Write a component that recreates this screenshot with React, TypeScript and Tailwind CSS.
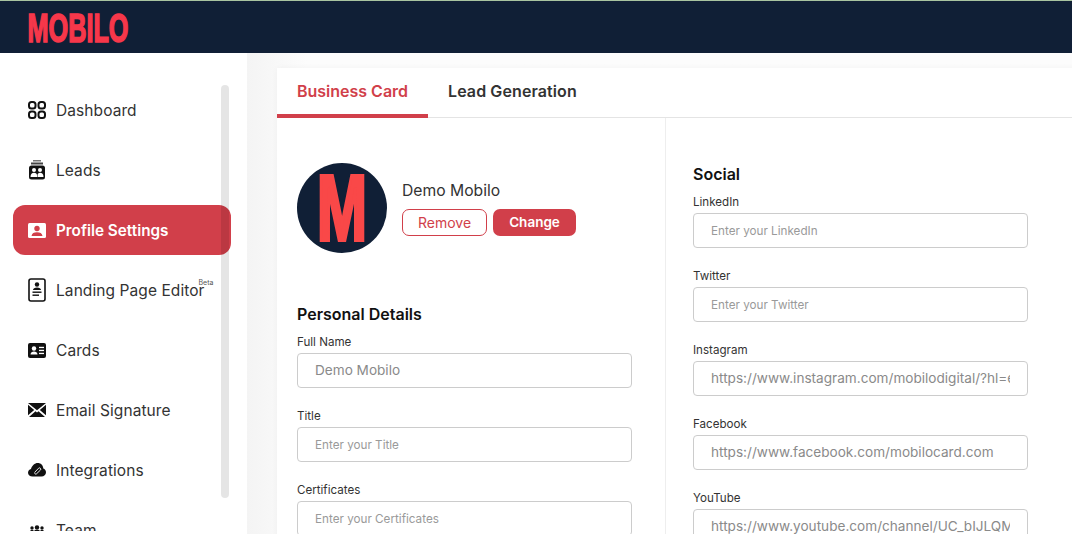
import type { ReactNode } from "react";

const font = { fontFamily: '"Inter", "Noto Sans", sans-serif' };

const navItems: { label: string; icon: ReactNode; active?: boolean; beta?: boolean }[] = [
  {
    label: "Dashboard",
    icon: (
      <svg width="18" height="18" viewBox="0 0 18 18" fill="none" stroke="#111" strokeWidth="2">
        <rect x="1" y="1" width="6.5" height="6.5" rx="2.5" />
        <rect x="10.5" y="1" width="6.5" height="6.5" rx="2.5" />
        <rect x="1" y="10.5" width="6.5" height="6.5" rx="2.5" />
        <rect x="10.5" y="10.5" width="6.5" height="6.5" rx="2.5" />
      </svg>
    ),
  },
  {
    label: "Leads",
    icon: (
      <svg width="18" height="20" viewBox="0 0 18 20">
        <rect x="5" y="0" width="8" height="1.5" fill="#777" />
        <rect x="3" y="2.5" width="12" height="2" fill="#444" />
        <rect x="1" y="5.5" width="16" height="14" rx="2.5" fill="#111" />
        <circle cx="6" cy="10" r="2" fill="#fff" />
        <circle cx="12" cy="10" r="2" fill="#fff" />
        <path d="M2.5 17c0-3 1.5-4.2 3.5-4.2s3 1 3 2.8v1.4zM9.5 17v-1.4c0-1.8 1-2.8 2.5-2.8 2 0 3.5 1.200 3.500 4.200z" fill="#fff" />
      </svg>
    ),
  },
  {
    label: "Profile Settings",
    active: true,
    icon: (
      <svg width="18" height="15" viewBox="0 0 18 15">
        <rect x="0" y="0" width="18" height="15" rx="1.500" fill="#fff" />
        <circle cx="9" cy="5.500" r="2.700" fill="#d13f4a" />
        <path d="M3.500 13c.4-2.800 2.500-3.800 5.500-3.800s5.100 1 5.500 3.800z" fill="#d13f4a" />
      </svg>
    ),
  },
  {
    label: "Landing Page Editor",
    beta: true,
    icon: (
      <svg width="18" height="24" viewBox="0 0 18 24">
        <rect x="1" y="1" width="16" height="22" rx="2" fill="none" stroke="#111" strokeWidth="1.600" />
        <circle cx="9" cy="6.500" r="2.200" fill="#111" />
        <path d="M5 12c0-1.800 1.800-2.600 4-2.600s4 .8 4 2.600z" fill="#111" />
        <rect x="4.500" y="13.500" width="9" height="1.400" fill="#111" />
        <rect x="4.500" y="16.500" width="6.500" height="1.400" fill="#111" />
      </svg>
    ),
  },
  {
    label: "Cards",
    icon: (
      <svg width="18" height="15" viewBox="0 0 18 15">
        <rect x="0" y="0" width="18" height="15" rx="2" fill="#111" />
        <circle cx="6" cy="5.500" r="2.200" fill="#fff" />
        <path d="M2.500 11.500c.2-2.200 1.600-3 3.500-3s3.300.8 3.500 3z" fill="#fff" />
        <rect x="11" y="3.800" width="5" height="1.300" fill="#fff" />
        <rect x="11" y="6.800" width="5" height="1.300" fill="#fff" />
        <rect x="11" y="9.800" width="5" height="1.300" fill="#fff" />
      </svg>
    ),
  },
  {
    label: "Email Signature",
    icon: (
      <svg width="18" height="14" viewBox="0 0 18 14">
        <path d="M0 0h18L9 7.200zM0 1.800v10.400L6.200 7zM18 1.800v10.400L11.800 7zM1 14l6.500-5.700L9 9.500l1.500-1.200L17 14z" fill="#111" />
      </svg>
    ),
  },
  {
    label: "Integrations",
    icon: (
      <svg width="18" height="14" viewBox="0 0 18 14">
        <path d="M4.500 13.500C2 13.500 0 12 0 9.800c0-1.900 1.300-3.300 3-3.700C3.800 2.600 6.700 0 9.800 0c3 0 5.300 2.200 5.500 5.400 1.600.5 2.700 2 2.700 3.800 0 2.500-2 4.300-4.500 4.300z" fill="#111" />
        <path d="M6.500 9.500l4-4.200a1.300 1.300 0 0 1 1.900 1.800L8.300 11a.9.900 0 0 1-1.300-1.200" fill="none" stroke="#fff" strokeWidth="0.900" />
      </svg>
    ),
  },
  {
    label: "Team",
    icon: (
      <svg width="18" height="14" viewBox="0 0 18 14">
        <circle cx="4" cy="5" r="1.700" fill="#111" />
        <circle cx="9" cy="4.500" r="2.200" fill="#111" />
        <circle cx="14" cy="5" r="1.700" fill="#111" />
        <rect x="2.500" y="7" width="3" height="6" fill="#111" />
        <rect x="6.500" y="7" width="5" height="7" fill="#111" />
        <rect x="12.500" y="7" width="3" height="6" fill="#111" />
      </svg>
    ),
  },
];

const personal = [
  { label: "Full Name", value: "Demo Mobilo" },
  { label: "Title", placeholder: "Enter your Title" },
  { label: "Certificates", placeholder: "Enter your Certificates" },
];

const social = [
  { label: "LinkedIn", placeholder: "Enter your LinkedIn" },
  { label: "Twitter", placeholder: "Enter your Twitter" },
  { label: "Instagram", value: "https://www.instagram.com/mobilodigital/?hl=en" },
  { label: "Facebook", value: "https://www.facebook.com/mobilocard.com" },
  { label: "YouTube", value: "https://www.youtube.com/channel/UC_bIJLQMxyz" },
];

const Field = ({ label, value, placeholder }: { label: string; value?: string; placeholder?: string }) => (
  <div className="w-[335px]">
    <label className="block h-[18px] text-[11.6px] leading-[18px] text-[#333]">{label}</label>
    <input
      readOnly
      value={value}
      placeholder={placeholder}
      style={font}
      className="mt-[2px] block h-[35px] w-full rounded-[4px] border border-[#ccc] bg-white pb-[2px] pl-[17px] pr-[17px] text-[13.6px] text-[#8a8a8a] outline-none placeholder:text-[11.7px] placeholder:text-[#9a9a9a]"
    />
  </div>
);

const Avatar = () => (
  <svg width="90" height="90" viewBox="0 0 90 90">
    <circle cx="45" cy="45" r="45" fill="#101f36" />
    <text
      x="20"
      y="77"
      textLength="50"
      lengthAdjust="spacingAndGlyphs"
      fontFamily="Liberation Sans"
      fontWeight="700"
      fontSize="92"
      stroke="#f94848"
      strokeWidth="4"
      fill="#f94848"
    >
      M
    </text>
  </svg>
);

export default function App() {
  return (
    <div style={font} className="flex h-[534px] w-[1072px] flex-col overflow-hidden bg-white">
      <header className="h-[53px] shrink-0 border-t border-[#a9c4a0] bg-[#101f36] pl-[27px]">
        <svg width="104" height="32" viewBox="0 0 104 32" className="mt-[11px]">
          <text
            x="0.500"
            y="29.500"
            textLength="101"
            lengthAdjust="spacingAndGlyphs"
            fontFamily="Liberation Sans"
            fontWeight="700"
            fontSize="41"
            stroke="#f7374a"
            strokeWidth="1.700"
            fill="#f7374a"
          >
            MOBILO
          </text>
        </svg>
      </header>

      <div className="flex min-h-0 flex-1">
        <aside className="relative w-[247px] shrink-0 bg-white pl-[13px] pt-[32px]">
          <nav className="flex h-[446px] w-[218px] flex-col gap-[10px] overflow-hidden">
            {navItems.map((item) => (
              <div
                key={item.label}
                className={`flex h-[50px] shrink-0 items-center rounded-[12px] ${
                  item.active ? "bg-[#d13f4a] font-semibold text-white" : "text-[#333]"
                }`}
              >
                <span className="flex w-[43px] shrink-0 justify-center pl-[5px]">{item.icon}</span>
                <span
                  className={`pt-[2px] whitespace-nowrap ${
                    item.active ? "text-[15.3px]" : "text-[15.5px] tracking-[0.08px]"
                  }`}
                >
                  {item.label}
                </span>
                {item.beta && <span className="mb-[14px] -ml-[6px] text-[7px] text-[#555]">Beta</span>}
              </div>
            ))}
          </nav>
          {/* scrollbar sits over the menu */}
          <div className="absolute left-[221px] top-[32px] h-[413px] w-[8px] rounded-[4px] bg-black/10" />
        </aside>

        <main className="min-w-0 flex-1 bg-linear-to-r from-[#f4f4f4] from-[0px] to-[#fcfcfc] to-[60px] pl-[30px] pt-[15px]">
          <div className="h-[600px] w-[840px] bg-white shadow-[0_0_6px_rgba(0,0,0,0.04)]">
            <div className="flex h-[50px] border-b border-[#e4e4e4]">
              <div className="-mb-px flex w-[151px] items-center justify-center border-b-4 border-[#d13f4a] text-[16px] font-semibold text-[#d13f4a]">
                Business Card
              </div>
              <div className="flex items-center pb-[3px] pl-[20px] text-[16px] font-semibold tracking-[0.1px] text-[#333]">
                Lead Generation
              </div>
            </div>

            <div className="flex">
              <section className="w-[389px] border-r border-[#eee] pl-[20px] pt-[45px]">
                <div className="flex items-center gap-[15px]">
                  <Avatar />
                  <div className="-mt-[2px]">
                    <div className="text-[15.7px] leading-[24px] text-[#333]">Demo Mobilo</div>
                    <div className="mt-[6px] flex gap-[6px]">
                      <button className="h-[27px] w-[85px] rounded-[7px] border border-[#d13f4a] text-[14px] text-[#d13f4a]">
                        Remove
                      </button>
                      <button className="h-[27px] w-[83px] rounded-[7px] bg-[#d13f4a] text-[13.5px] font-semibold text-white">
                        Change
                      </button>
                    </div>
                  </div>
                </div>
                <h2 className="mt-[49px] text-[16px] leading-[24px] font-semibold text-[#111]">Personal Details</h2>
                <div className="mt-[7px] flex flex-col gap-[19px]">
                  {personal.map((f) => (
                    <Field key={f.label} {...f} />
                  ))}
                </div>
              </section>

              <section className="pl-[27px] pt-[44px]">
                <h2 className="text-[16px] leading-[24px] font-semibold text-[#111]">Social</h2>
                <div className="mt-[7px] flex flex-col gap-[19px]">
                  {social.map((f) => (
                    <Field key={f.label} {...f} />
                  ))}
                </div>
              </section>
            </div>
          </div>
        </main>
      </div>
    </div>
  );
}
